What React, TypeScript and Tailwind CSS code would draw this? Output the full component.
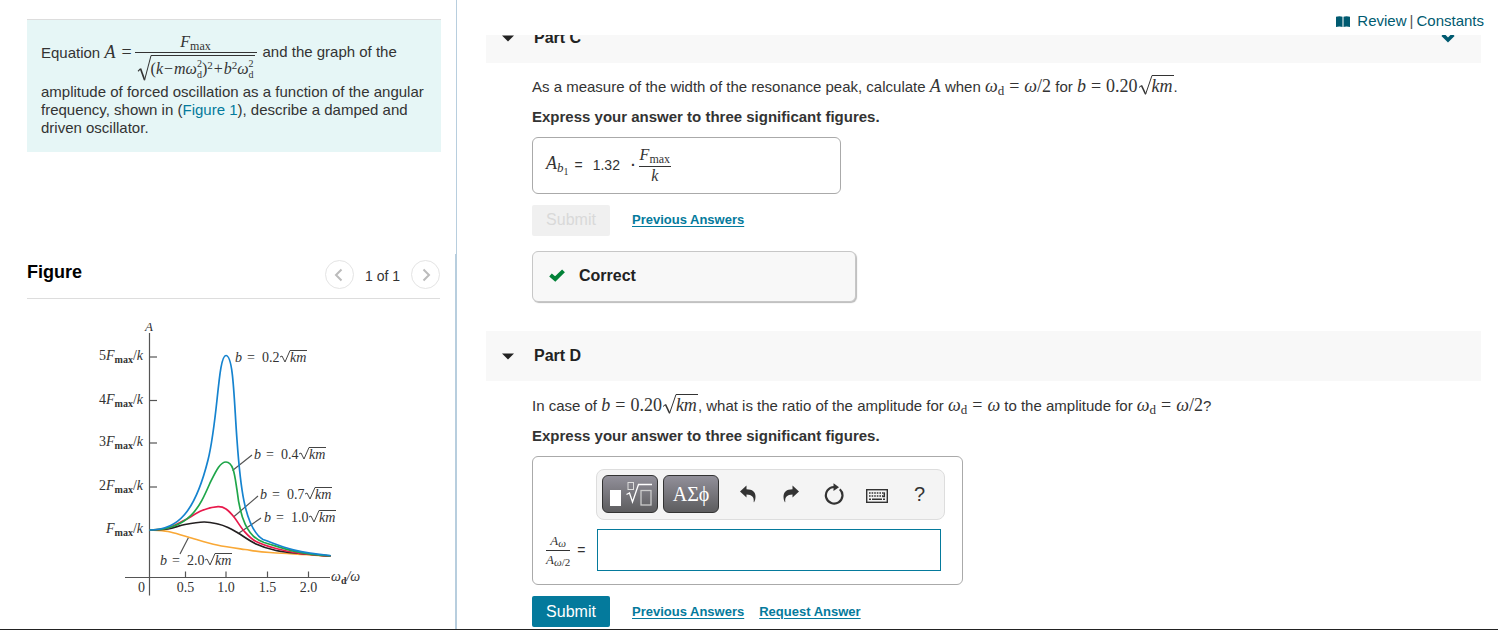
import React from "react";

const serif = "font-['Liberation_Serif',serif]";

function Var({ children }: { children: React.ReactNode }) {
  return <i className="font-['Liberation_Serif',serif]">{children}</i>;
}

function Eq() {
  return <span className="mx-[5px]">=</span>;
}

function Sub({ children }: { children: React.ReactNode }) {
  return <sub className="relative bottom-0 align-[-3px] text-[13px] leading-none">{children}</sub>;
}

function Sqrt({ children }: { children: React.ReactNode }) {
  return (
    <span className="inline-flex leading-none">
      <svg
        className="w-[14px] self-stretch overflow-visible"
        viewBox="0 0 14 20"
        preserveAspectRatio="none"
        fill="none"
        stroke="#333"
        aria-hidden="true"
      >
        <path d="M1 12.5 3.5 10.5" strokeWidth="1" />
        <path d="M3.5 10.5 7.5 19" strokeWidth="1.6" />
        <path d="M7.5 19.5 14 .5" strokeWidth="1" />
      </svg>
      <span className="self-baseline border-t border-[#333] pr-px pt-px">{children}</span>
    </span>
  );
}

function Stack({ top, bottom }: { top: string; bottom: string }) {
  return (
    <span className="inline-flex flex-col align-middle text-[10px] leading-[11px]">
      <span>{top}</span>
      <span>{bottom}</span>
    </span>
  );
}

function MathSpan({ children }: { children: React.ReactNode }) {
  return <span className="font-['Liberation_Serif',serif] text-[18px] leading-none">{children}</span>;
}

function OmegaD() {
  return (
    <>
      <Var>ω</Var>
      <Sub>d</Sub>
    </>
  );
}

function PartHeader({ title, done }: { title: string; done?: boolean }) {
  return (
    <div className="mr-[17px] flex h-[50px] shrink-0 items-center bg-[#f8f8f8] pl-4 pr-[26px]">
      <svg className="w-[12px]" viewBox="0 0 12 7" aria-hidden="true">
        <path d="M0 .5h12L6 6.5z" fill="#222" />
      </svg>
      <h2 className="ml-5 text-[16px] font-bold text-[#222]">{title}</h2>
      {done && (
        <svg className="ml-auto h-[10px] w-[14px]" viewBox="0 0 14 10" fill="none" stroke="#005a70" strokeWidth="3.600" aria-hidden="true">
          <path d="M1.700 1.700 7 7l5.300-5.300" />
        </svg>
      )}
    </div>
  );
}

type Pt = [number, number];

function smooth(p: Pt[]): string {
  let d = `M${p[0][0]} ${p[0][1]}`;
  for (let i = 0; i < p.length - 1; i++) {
    const a = p[i - 1] ?? p[i];
    const b = p[i];
    const c = p[i + 1];
    const e = p[i + 2] ?? c;
    d += `C${b[0] + (c[0] - a[0]) / 6} ${b[1] + (c[1] - a[1]) / 6} ${c[0] - (e[0] - b[0]) / 6} ${c[1] - (e[1] - b[1]) / 6} ${c[0]} ${c[1]}`;
  }
  return d;
}

const curves: { color: string; d: string }[] = [
  { color: "#f9a836", d: smooth([[150, 530], [168, 531.5], [188, 537], [217, 545], [245, 549.5], [270, 552.5], [330, 556]]) },
  { color: "#231f20", d: smooth([[150, 530], [168, 529], [185, 524.5], [204, 522], [218, 524], [228, 527.5], [238, 533], [256, 544], [276, 550.5], [300, 553.5], [330, 556]]) },
  { color: "#e8194b", d: smooth([[150, 530], [168, 528], [185, 520], [202, 510.5], [218, 506.7], [226, 509], [234, 517], [244, 531], [256, 541.5], [276, 548.5], [300, 553.5], [330, 556]]) },
  { color: "#1fa64a", d: "M150 530C190 530 200 506 210 483C216 471 220 462 226 462C234 462 235 478 237 490C240 517 247 537 264 542.500C280 547 295 554 330 555.800" },
  { color: "#1583cf", d: "M150 530C178 530 195 512 208 460C218 420 218 355.500 226 355.500C233.500 355.500 234 400 237 440C240 482 244 528 263 539.500C279 545 290 552 330 555.500" },
];

const curveLabels: { x: number; y: number; n: string }[] = [
  { x: 235, y: 362, n: "0.2" },
  { x: 254, y: 459, n: "0.4" },
  { x: 260, y: 499, n: "0.7" },
  { x: 264, y: 522, n: "1.0" },
  { x: 160, y: 565, n: "2.0" },
];

const yTicks: { y: number; n: string }[] = [
  { y: 357, n: "5" },
  { y: 400.5, n: "4" },
  { y: 443, n: "3" },
  { y: 487, n: "2" },
  { y: 530, n: "" },
];

const xTicks: { x: number; n: string }[] = [
  { x: 185.5, n: "0.5" },
  { x: 226, n: "1.0" },
  { x: 267.5, n: "1.5" },
  { x: 308.5, n: "2.0" },
];

function ResonanceGraph() {
  return (
    <svg
      className="ml-[63px] block w-[290px] font-['Liberation_Serif',serif]"
      viewBox="90 315 290 290"
      role="img"
      aria-label="Amplitude against driving frequency for five damping constants"
      fill="#333"
      fontSize="14"
      stroke="none"
    >
      <g stroke="#555" strokeWidth="1.200" fill="none">
        <path d="M149.500 333V595.500M125 577.500H330" />
        {yTicks.map((t) => (
          <path key={t.y} d={`M149.500 ${t.y}h7.500`} />
        ))}
        {xTicks.map((t) => (
          <path key={t.x} d={`M${t.x} 577v-5.500`} />
        ))}
        <path d="M232.500 470.500 252 455M233.500 517 258 496M239 533 261 518M188.500 537.500 180 554" />
      </g>
      <g fill="none" strokeWidth="1.700" strokeLinecap="round">
        {curves.map((c) => (
          <path key={c.color} d={c.d} stroke={c.color} />
        ))}
      </g>
      <text x="145" y="331" fontStyle="italic" fontSize="13">A</text>
      {yTicks.map((t) => (
        <text key={t.y} x="143" y={t.y + 3} textAnchor="end">
          {t.n}
          <tspan fontStyle="italic">F</tspan>
          <tspan dy="3" fontSize="10" fontWeight="bold">max</tspan>
          <tspan dy="-3">/</tspan>
          <tspan fontStyle="italic">k</tspan>
        </text>
      ))}
      <text x="138" y="592">0</text>
      {xTicks.map((t) => (
        <text key={t.x} x={t.x} y="592" textAnchor="middle">{t.n}</text>
      ))}
      <text x="331" y="581" fontStyle="italic">
        ω<tspan dy="3" fontSize="10" fontStyle="normal" fontWeight="bold">d</tspan>
        <tspan dy="-3">/ω</tspan>
      </text>
      {curveLabels.map((l) => (
        <g key={l.n}>
          <text y={l.y}>
            <tspan x={l.x} fontStyle="italic">b</tspan>
            <tspan x={l.x + 12}>=</tspan>
            <tspan x={l.x + 27}>{l.n}</tspan>
            <tspan x={l.x + 55} fontStyle="italic">km</tspan>
          </text>
          <path
            d={`M${l.x + 45} ${l.y - 5}l2-1 3 6 5-11.500h17`}
            fill="none"
            stroke="#444"
            strokeWidth="1"
          />
        </g>
      ))}
    </svg>
  );
}

const toolButton =
  "flex h-[38px] w-14 items-center justify-center rounded-md border border-[#333] bg-linear-to-b from-[#92909a] to-[#5d5d5f] text-white";
const iconButton = "flex h-[38px] w-[43px] items-center justify-center text-[#333]";
const link = "text-[13px] font-bold text-[#047a9c] underline underline-offset-2";

export default function App() {
  return (
    <div className="flex h-screen flex-col overflow-hidden border-b border-[#222] bg-white font-['Liberation_Sans',Arial,sans-serif] text-[15px] text-[#333]">
      <div className="flex min-h-0 flex-1">
        <aside className="flex w-[457px] shrink-0 flex-col border-r border-[#b8cede]">
          <section className="ml-[27px] mr-[15px] mt-[19px] h-[133px] border-t border-[#ddd] bg-[#e6f6f6] pl-[14px] pr-[10px] pt-[13px] leading-[18px]">
            <div className="flex h-[50px] items-start whitespace-nowrap">
              <span className="leading-[38px]">
                Equation{" "}
                <span className="font-['Liberation_Serif',serif] text-[18px]">
                  <Var>A</Var>
                  <span className="ml-[6px] mr-[3px]">=</span>
                </span>
              </span>
              <span className={`${serif} flex flex-col items-center text-[16px]`}>
                <span className="h-[19px] leading-[17px]">
                  <Var>F</Var>
                  <sub className="relative bottom-0 align-[-3px] text-[12px] leading-none">max</sub>
                </span>
                <span className="border-t border-[#333] px-[2px] pt-[2px]">
                  <Sqrt>
                    <span className="inline-flex h-6 items-center">
                      (<Var>k</Var><span className="mx-px">−</span><Var>mω</Var>
                      <Stack top="2" bottom="d" />)<sup className="top-0 mb-2 text-[11px]">2</sup>
                      <span className="mx-px">+</span><Var>b</Var>
                      <sup className="top-0 mb-2 text-[11px]">2</sup>
                      <Var>ω</Var>
                      <Stack top="2" bottom="d" />
                    </span>
                  </Sqrt>
                </span>
              </span>
              <span className="ml-[6px] leading-[38px]">and the graph of the</span>
            </div>
            <p>
              amplitude of forced oscillation as a function of the angular frequency, shown in (
              <a href="#figure" className="text-[#047a9c]">Figure 1</a>), describe a damped and driven oscillator.
            </p>
          </section>
          <section id="figure" className="mt-[102px] flex-1 border-r border-[#b8cede] pl-[27px] pr-[15px]">
            <div className="flex h-[45px] items-center border-b border-[#ddd] pb-[3px]">
              <h2 className="mb-1 text-[18px] font-bold text-black">Figure</h2>
              <button aria-label="Previous figure" className="ml-auto flex size-[29px] items-center justify-center rounded-full border border-[#e4e4e4]">
                <svg className="size-[14px]" viewBox="0 0 14 14" fill="none" stroke="#bbb" strokeWidth="2" aria-hidden="true">
                  <path d="M9.500 1.500 4 7l5.500 5.500" />
                </svg>
              </button>
              <span className="mx-[11px] mt-1 text-[14px]">1 of 1</span>
              <button aria-label="Next figure" className="flex size-[29px] items-center justify-center rounded-full border border-[#e4e4e4]">
                <svg className="size-[14px]" viewBox="0 0 14 14" fill="none" stroke="#bbb" strokeWidth="2" aria-hidden="true">
                  <path d="M4.500 1.500 10 7l-5.500 5.500" />
                </svg>
              </button>
            </div>
            <div className="pt-4">
              <ResonanceGraph />
            </div>
          </section>
        </aside>

        <main className="flex min-w-0 flex-1 flex-col pl-[29px]">
          <nav className="flex h-[35px] shrink-0 items-center justify-end pr-[14px] pt-[7px] text-[#005a70]">
            <svg className="mr-[7px] h-[11px] w-[14px]" viewBox="0 0 14 11" fill="#005a70" aria-hidden="true">
              <path d="M0 .8C2 0 5 0 6.500.8V11C5 10.300 2 10.300 0 11zM7.500.8C9 0 12 0 14 .8V11c-2-.7-5-.7-6.500 0z" />
            </svg>
            <a href="#review">Review</a>
            <span className="mx-[3px] text-[#555]">|</span>
            <a href="#constants">Constants</a>
          </nav>

          <div className="min-h-0 flex-1 overflow-hidden">
            <section className="-mt-[22px]">
              <PartHeader title="Part C" done />
              <div className="flex flex-col items-start pl-[46px] pt-3">
                <p className="h-6 whitespace-nowrap leading-6">
                  As a measure of the width of the resonance peak, calculate{" "}
                  <MathSpan><Var>A</Var></MathSpan> when{" "}
                  <MathSpan><OmegaD /><Eq /><Var>ω</Var>/2</MathSpan> for{" "}
                  <MathSpan><Var>b</Var><Eq />0.20<Sqrt><Var>km</Var></Sqrt></MathSpan>.
                </p>
                <p className="mt-[9px] h-[18px] font-bold leading-[18px]">Express your answer to three significant figures.</p>
                <div className="mt-[11px] flex h-[57px] w-[309px] items-center rounded-md border border-[#aaa] pl-[13px] text-[14px]">
                  <MathSpan>
                    <Var>A</Var>
                    <sub className="relative bottom-0 align-[-3px] text-[13px] leading-none">
                      <Var>b</Var>
                      <span className="align-[-3px] text-[10px]">1</span>
                    </sub>
                  </MathSpan>
                  <span className="ml-[6px]">=</span>
                  <span className="ml-[10px]">1.32</span>
                  <span className="ml-[11px] mr-[3px] font-bold">·</span>
                  <span className={`${serif} flex flex-col items-center text-[16px]`}>
                    <span className="h-[20px] px-px leading-[18px]">
                      <Var>F</Var>
                      <sub className="relative bottom-0 align-[-3px] text-[12px] leading-none">max</sub>
                    </span>
                    <span className="w-full border-t border-[#333] text-center leading-[18px]"><Var>k</Var></span>
                  </span>
                </div>
                <div className="mt-[11px] flex items-center">
                  <button disabled className="h-[31px] w-[78px] rounded-xs bg-[#f0f0f0] pb-[2px] text-[16px] text-[#d9d9d9]">Submit</button>
                  <a href="#previous-c" className={`${link} ml-[22px] pb-[2px]`}>Previous Answers</a>
                </div>
                <div className="mb-[29px] mt-[15px] flex h-[51px] w-[324px] items-center rounded-md border border-[#c7c7c7] bg-[#f8f8f8] pb-[2px] pl-4 text-[16px] font-bold text-[#222] shadow-[1px_1px_1px_#bbb]">
                  <svg className="mr-[14px] h-[13px] w-4" viewBox="0 0 16 13" fill="none" stroke="#038238" strokeWidth="4" aria-hidden="true">
                    <path d="M1.500 6 6.200 10 14.500 1.800" />
                  </svg>
                  Correct
                </div>
              </div>
            </section>

            <section>
              <PartHeader title="Part D" />
              <div className="flex flex-col items-start pl-[46px] pt-[13px]">
                <p className="h-6 whitespace-nowrap leading-6">
                  In case of <MathSpan><Var>b</Var><Eq />0.20<Sqrt><Var>km</Var></Sqrt></MathSpan>, what is the ratio of the amplitude for{" "}
                  <MathSpan><OmegaD /><Eq /><Var>ω</Var></MathSpan> to the amplitude for{" "}
                  <MathSpan><OmegaD /><Eq /><Var>ω</Var>/2</MathSpan>?
                </p>
                <p className="mt-[9px] h-[18px] font-bold leading-[18px]">Express your answer to three significant figures.</p>
                <div className="mt-[11px] h-[129px] w-[431px] rounded-md border border-[#aaa] pl-[13px] pr-[17px] pt-3">
                  <div role="toolbar" className="ml-[50px] flex h-[51px] items-center rounded-lg border border-[#ddd] bg-[#f4f4f4] pb-[2px] pl-[5px]">
                    <button aria-label="Templates" className={toolButton}>
                      <svg className="h-[26px] w-[44px]" viewBox="0 0 44 26" fill="none" stroke="#fff" aria-hidden="true">
                        <rect x="2" y="9" width="11" height="16" fill="#fff" stroke="none" />
                        <rect x="20" y="1.500" width="5.500" height="7" stroke="#ddd" />
                        <path d="M18.500 13.500l3-1.500 3 9L30.500 3.500H44" strokeWidth="1.300" />
                        <rect x="33" y="9.500" width="10" height="14.500" stroke="#ccc" strokeWidth="1.300" />
                      </svg>
                    </button>
                    <button className={`${toolButton} ml-[5px] font-['Liberation_Serif',serif] text-[20px]`}>ΑΣϕ</button>
                    <button aria-label="Undo" className={`${iconButton} ml-[7px]`}>
                      <svg className="h-[18px] w-[16px]" viewBox="0 0 16 18" fill="currentColor" aria-hidden="true">
                        <path d="M0 6.500 6.500.5v3.700C12.500 4.200 15.500 7 15.500 11.500c0 2-.4 4-1.300 5.500-.2.300-.6.200-.5-.2.600-4.300-1.700-7.200-7.200-7.200v3z" />
                      </svg>
                    </button>
                    <button aria-label="Redo" className={iconButton}>
                      <svg className="h-[18px] w-[16px]" viewBox="0 0 16 18" fill="currentColor" aria-hidden="true">
                        <path d="M16 6.500 9.500.5v3.700C3.500 4.200.5 7 .5 11.500c0 2 .4 4 1.300 5.500.2.300.6.200.5-.2-.6-4.300 1.700-7.200 7.200-7.200v3z" />
                      </svg>
                    </button>
                    <button aria-label="Reset" className={iconButton}>
                      <svg className="h-[22px] w-[20px]" viewBox="0 0 20 22" fill="none" aria-hidden="true">
                        <path d="M15.800 6.200A8.300 8.300 0 1 1 10 4" stroke="currentColor" strokeWidth="2.200" />
                        <path d="M9.500.2 15 4.200 9.500 8z" fill="currentColor" />
                      </svg>
                    </button>
                    <button aria-label="Keyboard" className={iconButton}>
                      <svg className="mt-[5px] h-[14px] w-[22px]" viewBox="0 0 22 14" fill="none" stroke="currentColor" aria-hidden="true">
                        <rect x=".7" y=".7" width="20.600" height="12.600" strokeWidth="1.400" />
                        <path d="M3 4h16M3 7h14" strokeWidth="1.700" strokeDasharray="1.600 1" />
                        <path d="M3 10.300h2M6 10.300h10M17 10.300h2M18.300 3.500v4h-2" strokeWidth="1.500" />
                      </svg>
                    </button>
                    <button aria-label="Help" className={`${iconButton} text-[20px]`}>?</button>
                  </div>
                  <div className="mt-[9px] flex items-center">
                    <label htmlFor="ratio" className="flex w-[51px] items-center text-[14px]">
                      <span className={`${serif} flex flex-col items-center text-[13px] leading-[18px]`}>
                        <span><Var>A</Var><sub className="text-[11px] italic">ω</sub></span>
                        <span className="border-t border-[#333]"><Var>A</Var><sub className="text-[11px]"><Var>ω</Var>/2</sub></span>
                      </span>
                      <span className="ml-[7px]">=</span>
                    </label>
                    <input id="ratio" type="text" className="h-[42px] w-[344px] border border-[#047a9c] bg-white px-2 text-[16px] outline-none" />
                  </div>
                </div>
                <div className="mt-[11px] flex items-center">
                  <button className="h-[31px] w-[78px] rounded-xs bg-[#047a9c] text-[16px] text-white">Submit</button>
                  <a href="#previous-d" className={`${link} ml-[22px]`}>Previous Answers</a>
                  <a href="#request" className={`${link} ml-[15px]`}>Request Answer</a>
                </div>
              </div>
            </section>
          </div>
        </main>
      </div>
    </div>
  );
}
